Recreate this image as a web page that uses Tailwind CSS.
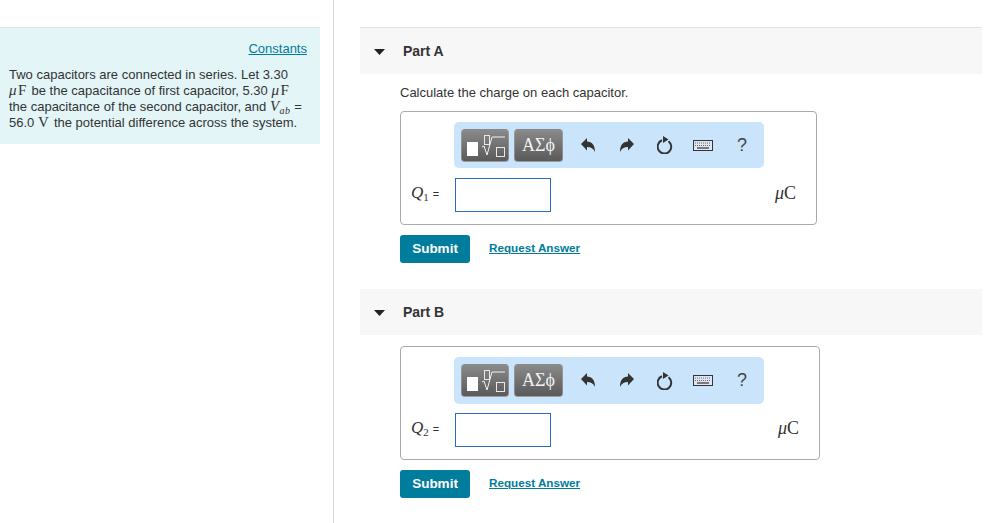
<!DOCTYPE html>
<html>
<head>
<meta charset="utf-8">
<script src="https://cdn.jsdelivr.net/npm/@tailwindcss/browser@4"></script>
</head>
<body class="bg-white">
<div class="w-[990px] h-[523px] overflow-hidden flex font-['Liberation_Sans',Arial,sans-serif] text-[#333]">
  <!-- left column -->
  <div class="w-[334px] h-full shrink-0 border-r border-[#d4d7da] pt-[27px]">
    <div class="w-[320px] h-[117px] border-t border-[#dfe3e6] bg-[#e3f5f7] pt-[13px] pl-[9px] pr-[13px]">
      <div class="text-right text-[13px] leading-[16px]"><a class="text-[#007c9c] underline">Constants</a></div>
      <p class="mt-[10px] text-[13px] leading-[16px] text-[#333] whitespace-nowrap">Two capacitors are connected in series. Let 3.30<br><span class="font-['Liberation_Serif',serif] text-[15px] leading-[0] tracking-[1.500px]"><i>μ</i>F</span> be the capacitance of first capacitor, 5.30 <span class="font-['Liberation_Serif',serif] text-[15px] leading-[0] tracking-[1.500px]"><i>μ</i>F</span><br>the capacitance of the second capacitor, and <span class="font-['Liberation_Serif',serif] text-[15px] leading-[0] tracking-[0.500px]"><i>V</i><sub class="text-[10px] leading-[0] tracking-[0.500px]"><i>ab</i></sub></span> =<br>56.0 <span class="font-['Liberation_Serif',serif] text-[15px] leading-[0] tracking-[1.500px]">V</span> the potential difference across the system.</p>
    </div>
  </div>
  <!-- right column -->
  <div class="w-[622px] ml-[26px] shrink-0 pt-[27px]">
    <!-- Part A -->
    <div class="h-[47px] border-t border-[#dfe3e6] bg-[#f7f7f7] flex items-center">
      <svg class="ml-[14px] mt-[1px] w-[11px] h-[6px]" viewBox="0 0 11 6"><path d="M0 0h11L5.500 6z" fill="#222"/></svg>
      <span class="ml-[18px] text-[14px] font-bold text-[#333]">Part A</span>
    </div>
    <p class="ml-[40px] mt-[11px] text-[13px] leading-[16px] text-[#333]">Calculate the charge on each capacitor.</p>
    <!-- Box 1 -->
    <div class="ml-[40px] mt-[10px] w-[417px] h-[114px] border border-[#aaa] rounded-[4px] pt-[10px] pl-[53px]">
      <div class="w-[310px] h-[46px] bg-[#c9e4fb] rounded-[5px] flex items-center pl-[7px]">
        <div class="w-[48px] h-[33px] rounded-[4px] bg-gradient-to-b from-[#8a8a8a] to-[#5a5a5a] border border-[#a9a9a9]/60 shrink-0">
          <svg width="46" height="31" viewBox="1 1 46 31"><rect x="6" y="13" width="11" height="14" fill="#fff"/><rect x="23.500" y="6.500" width="5" height="9" fill="none" stroke="#e8e8e8"/><path d="M21 18l2-1 3 9 5-18h13" fill="none" stroke="#f2f2f2"/><rect x="35.500" y="18.500" width="8" height="9" fill="none" stroke="#e8e8e8"/></svg>
        </div>
        <div class="ml-[5px] w-[49px] h-[33px] rounded-[4px] bg-gradient-to-b from-[#8a8a8a] to-[#5a5a5a] border border-[#a9a9a9]/60 flex items-center justify-center font-['Liberation_Serif',serif] text-[18px] text-[#f2f2f2] shrink-0">ΑΣϕ</div>
        <svg class="ml-[18px] shrink-0" width="14" height="15" viewBox="0 0 14 15"><path d="M0 6 6 0v3.500c5 0 8 3.500 8 10.500-1.500-3.500-4-5-8-5v3.500z" fill="#333"/></svg>
        <svg class="ml-[25px] shrink-0" width="14" height="15" viewBox="0 0 14 15"><path d="M14 6 8 0v3.500c-5 0-8 3.500-8 10.500 1.500-3.500 4-5 8-5v3.500z" fill="#333"/></svg>
        <svg class="ml-[23px] shrink-0" width="16" height="18" viewBox="0 0 16 18"><path d="M11.500 5.200A6.800 6.800 0 1 1 5 4.300" fill="none" stroke="#333" stroke-width="2"/><path d="M6 0l5.500 3.500L6 7z" fill="#333"/></svg>
        <svg class="ml-[20px] shrink-0" width="20" height="11" viewBox="0 0 20 11"><rect x=".5" y=".5" width="19" height="10" fill="#dfe6ec" stroke="#334"/><path d="M2 3h16M2 5.500h16" stroke="#667" stroke-width="1.200" stroke-dasharray="1 1"/><path d="M4 8h12" stroke="#556" stroke-width="1.500"/></svg>
        <span class="ml-[24px] text-[18px] text-[#444]">?</span>
      </div>
      <div class="mt-[10px] flex items-center h-[34px] -ml-[43px]">
        <span class="-mt-[5px] w-[44px] font-['Liberation_Serif',serif] text-[17px] text-[#333] whitespace-nowrap"><i>Q</i><sub class="text-[11px]">1</sub><span class="ml-[4px] font-['Liberation_Sans',sans-serif] text-[11px]">=</span></span>
        <div class="w-[96px] h-[34px] border border-[#2a6bc4] bg-white shrink-0"></div>
        <span class="-mt-[3px] ml-[224px] font-['Liberation_Serif',serif] text-[18px] text-[#333]"><i>μ</i>C</span>
      </div>
    </div>
    <div class="ml-[40px] mt-[10px] flex items-center">
      <button class="w-[70px] h-[28px] rounded-[3px] bg-[#007c9c] text-white text-[13.500px] font-bold pt-[1px]">Submit</button>
      <a class="ml-[19px] -mt-[2px] text-[11.700px] font-bold text-[#007c9c] underline">Request Answer</a>
    </div>
    <!-- Part B -->
    <div class="mt-[26px] h-[46px] bg-[#f7f7f7] flex items-center">
      <svg class="ml-[14px] mt-[1px] w-[11px] h-[6px]" viewBox="0 0 11 6"><path d="M0 0h11L5.500 6z" fill="#222"/></svg>
      <span class="ml-[18px] text-[14px] font-bold text-[#333]">Part B</span>
    </div>
    <!-- Box 2 -->
    <div class="ml-[40px] mt-[11px] w-[420px] h-[114px] border border-[#aaa] rounded-[4px] pt-[10px] pl-[53px]">
      <div class="w-[310px] h-[47px] bg-[#c9e4fb] rounded-[5px] flex items-center pl-[7px]">
        <div class="w-[48px] h-[33px] rounded-[4px] bg-gradient-to-b from-[#8a8a8a] to-[#5a5a5a] border border-[#a9a9a9]/60 shrink-0">
          <svg width="46" height="31" viewBox="1 1 46 31"><rect x="6" y="13" width="11" height="14" fill="#fff"/><rect x="23.500" y="6.500" width="5" height="9" fill="none" stroke="#e8e8e8"/><path d="M21 18l2-1 3 9 5-18h13" fill="none" stroke="#f2f2f2"/><rect x="35.500" y="18.500" width="8" height="9" fill="none" stroke="#e8e8e8"/></svg>
        </div>
        <div class="ml-[5px] w-[49px] h-[33px] rounded-[4px] bg-gradient-to-b from-[#8a8a8a] to-[#5a5a5a] border border-[#a9a9a9]/60 flex items-center justify-center font-['Liberation_Serif',serif] text-[18px] text-[#f2f2f2] shrink-0">ΑΣϕ</div>
        <svg class="ml-[18px] shrink-0" width="14" height="15" viewBox="0 0 14 15"><path d="M0 6 6 0v3.500c5 0 8 3.500 8 10.500-1.500-3.500-4-5-8-5v3.500z" fill="#333"/></svg>
        <svg class="ml-[25px] shrink-0" width="14" height="15" viewBox="0 0 14 15"><path d="M14 6 8 0v3.500c-5 0-8 3.500-8 10.500 1.500-3.500 4-5 8-5v3.500z" fill="#333"/></svg>
        <svg class="ml-[23px] shrink-0" width="16" height="18" viewBox="0 0 16 18"><path d="M11.500 5.200A6.800 6.800 0 1 1 5 4.300" fill="none" stroke="#333" stroke-width="2"/><path d="M6 0l5.500 3.500L6 7z" fill="#333"/></svg>
        <svg class="ml-[20px] shrink-0" width="20" height="11" viewBox="0 0 20 11"><rect x=".5" y=".5" width="19" height="10" fill="#dfe6ec" stroke="#334"/><path d="M2 3h16M2 5.500h16" stroke="#667" stroke-width="1.200" stroke-dasharray="1 1"/><path d="M4 8h12" stroke="#556" stroke-width="1.500"/></svg>
        <span class="ml-[24px] text-[18px] text-[#444]">?</span>
      </div>
      <div class="mt-[9px] flex items-center h-[34px] -ml-[43px]">
        <span class="-mt-[5px] w-[44px] font-['Liberation_Serif',serif] text-[17px] text-[#333] whitespace-nowrap"><i>Q</i><sub class="text-[11px]">2</sub><span class="ml-[4px] font-['Liberation_Sans',sans-serif] text-[11px]">=</span></span>
        <div class="w-[96px] h-[34px] border border-[#2a6bc4] bg-white shrink-0"></div>
        <span class="-mt-[3px] ml-[227px] font-['Liberation_Serif',serif] text-[18px] text-[#333]"><i>μ</i>C</span>
      </div>
    </div>
    <div class="ml-[40px] mt-[10px] flex items-center">
      <button class="w-[70px] h-[28px] rounded-[3px] bg-[#007c9c] text-white text-[13.500px] font-bold pt-[1px]">Submit</button>
      <a class="ml-[19px] -mt-[2px] text-[11.700px] font-bold text-[#007c9c] underline">Request Answer</a>
    </div>
  </div>
</div>
</body>
</html>
